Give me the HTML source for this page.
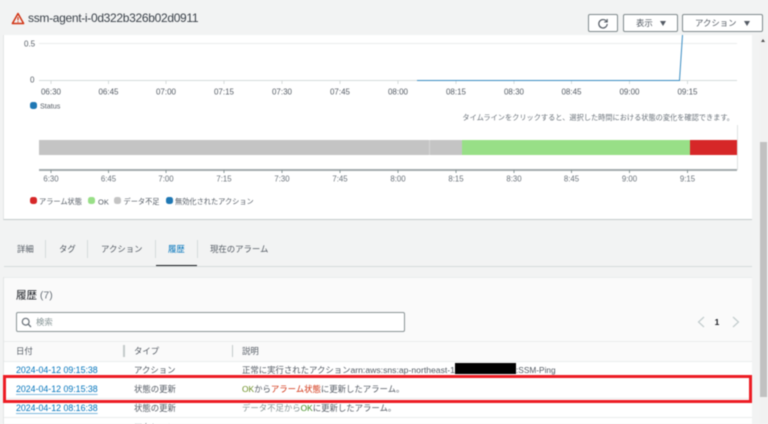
<!DOCTYPE html>
<html lang="ja">
<head>
<meta charset="utf-8">
<style>
html,body{margin:0;padding:0;width:768px;height:424px;overflow:hidden;background:#f2f3f3}
body{font-family:"Liberation Sans","Noto Sans CJK JP",sans-serif;color:#545b64;font-size:8.4px}
#w{position:relative;width:768px;height:424px;overflow:hidden;background:#f2f3f3;filter:blur(.4px)}
.a{position:absolute;white-space:nowrap}
.t{position:absolute;white-space:nowrap;transform:translate(-50%,-50%);font-size:8px}
.m{color:#687078;font-size:7.800px}
.l{position:absolute;white-space:nowrap;transform:translateY(-50%)}
.dot{position:absolute;width:7px;height:7px;border-radius:2.5px}
.btn{position:absolute;top:14px;height:18px;box-sizing:border-box;border:1px solid #7f8a8c;background:#fff;border-radius:2px;color:#545b64;font-size:8.400px;line-height:16px;text-align:center}
.tri{position:absolute;top:6px;border-left:3.5px solid transparent;border-right:3.5px solid transparent;border-top:5px solid #545b64;width:0;height:0}
.sep{position:absolute;width:1px;background:#d5dbdb}
a{color:#0073bb;text-decoration:underline;text-decoration-color:#7fb9dd;text-underline-offset:2px}
</style>
</head>
<body>
<div id="w">
<!-- top card -->
<div class="a" style="left:3px;top:35px;width:749px;height:185px;background:#fff;border-bottom:1px solid #c4caca;border-left:1px solid #e3e6e6;box-sizing:border-box"></div>

<!-- header -->
<svg class="a" style="left:11px;top:12px" width="14" height="13" viewBox="0 0 14 13"><path d="M7 1.5L12.6 11.5H1.4Z" fill="none" stroke="#d13212" stroke-width="1.5" stroke-linejoin="round"/><path d="M7 5v3.3M7 9.2v1.1" stroke="#d13212" stroke-width="1.2"/></svg>
<div class="l" style="left:28px;top:18px;font-size:12px;letter-spacing:-.31px;color:#3a4149">ssm-agent-i-0d322b326b02d0911</div>
<div class="btn" style="left:588px;width:30px"><svg width="12" height="12" viewBox="0 0 12 12" style="position:absolute;left:8px;top:2.5px"><path d="M9.6 3.6A4.2 4.2 0 1 0 10.2 6" fill="none" stroke="#545b64" stroke-width="1.2"/><path d="M10.2 1v3H7.2" fill="none" stroke="#545b64" stroke-width="1.1"/></svg></div>
<div class="btn" style="left:623px;width:55px;text-align:left;padding-left:12px">表示<span class="tri" style="left:36px"></span></div>
<div class="btn" style="left:682px;width:81px;text-align:left;padding-left:12px">アクション<span class="tri" style="left:61px"></span></div>

<!-- scrollbar -->
<div class="a" style="left:752px;top:35px;width:16px;height:389px;background:#f1f1f1"></div>
<div class="a" style="left:752px;top:35px;width:8px;height:389px;background:#f2f3f3"></div>
<div class="a" style="left:760px;top:142px;width:7px;height:255px;background:#c1c1c1"></div>
<div class="a" style="left:761px;top:39px;border-left:2.5px solid transparent;border-right:2.5px solid transparent;border-bottom:3px solid #505050;width:0;height:0"></div>

<!-- upper chart -->
<div class="l" style="left:24px;top:44px;font-size:8px">0.5</div>
<div class="l" style="left:30px;top:80px;font-size:8px">0</div>
<div class="a" style="left:39px;top:43px;width:698px;height:1px;background:#eaeded"></div>
<div class="a" style="left:39px;top:80px;width:698px;height:1px;background:#d5dbdb"></div>
<svg class="a" style="left:0;top:35px" width="768" height="60"><path d="M417 45.5H679.5L682.5 0" fill="none" stroke="#3a8cc2" stroke-width="1"/><path d="M51 46v3M108.500 46v3M166 46v3M224 46v3M282 46v3M340 46v3M398 46v3M456 46v3M514 46v3M571.500 46v3M629.500 46v3M687.500 46v3" stroke="#d5dbdb" stroke-width="1"/></svg>
<div class="t" style="left:51px;top:91.500px">06:30</div>
<div class="t" style="left:108.500px;top:91.500px">06:45</div>
<div class="t" style="left:166px;top:91.500px">07:00</div>
<div class="t" style="left:224px;top:91.500px">07:15</div>
<div class="t" style="left:282px;top:91.500px">07:30</div>
<div class="t" style="left:340px;top:91.500px">07:45</div>
<div class="t" style="left:398px;top:91.500px">08:00</div>
<div class="t" style="left:456px;top:91.500px">08:15</div>
<div class="t" style="left:514px;top:91.500px">08:30</div>
<div class="t" style="left:571.500px;top:91.500px">08:45</div>
<div class="t" style="left:629.500px;top:91.500px">09:00</div>
<div class="t" style="left:687.500px;top:91.500px">09:15</div>
<div class="dot" style="left:30px;top:101.500px;background:#1f78b4"></div>
<div class="l" style="left:40px;top:105.500px;font-size:7.200px">Status</div>

<!-- timeline -->
<div class="l" style="right:34px;top:117.500px;font-size:7.200px;color:#687078">タイムラインをクリックすると、選択した時間における状態の変化を確認できます。</div>
<div class="a" style="left:737px;top:125px;width:1px;height:45px;background:#dfe2e2"></div>
<div class="a" style="left:39px;top:140px;width:391px;height:15px;background:#c4c4c4"></div>
<div class="a" style="left:429px;top:140px;width:33px;height:15px;background:#c4c4c4;border-left:1px solid #d6d6d6;box-sizing:border-box"></div>
<div class="a" style="left:462px;top:140px;width:228px;height:15px;background:#98df87"></div>
<div class="a" style="left:690px;top:140px;width:47px;height:15px;background:#d62728"></div>
<div class="a" style="left:39px;top:169px;width:698px;height:2px;background:#a3abad"></div>
<svg class="a" style="left:0;top:170px" width="768" height="5"><path d="M51 0v3M108.500 0v3M166 0v3M224 0v3M282 0v3M340 0v3M398 0v3M456 0v3M514 0v3M571.500 0v3M629.500 0v3M687.500 0v3" stroke="#879596" stroke-width="1"/></svg>
<div class="t m" style="left:51px;top:178.500px">6:30</div>
<div class="t m" style="left:108.500px;top:178.500px">6:45</div>
<div class="t m" style="left:166px;top:178.500px">7:00</div>
<div class="t m" style="left:224px;top:178.500px">7:15</div>
<div class="t m" style="left:282px;top:178.500px">7:30</div>
<div class="t m" style="left:340px;top:178.500px">7:45</div>
<div class="t m" style="left:398px;top:178.500px">8:00</div>
<div class="t m" style="left:456px;top:178.500px">8:15</div>
<div class="t m" style="left:514px;top:178.500px">8:30</div>
<div class="t m" style="left:571.500px;top:178.500px">8:45</div>
<div class="t m" style="left:629.500px;top:178.500px">9:00</div>
<div class="t m" style="left:687.500px;top:178.500px">9:15</div>

<div class="dot" style="left:29.500px;top:197px;background:#d62728"></div>
<div class="l" style="left:39px;top:201.500px;font-size:7.200px">アラーム状態</div>
<div class="dot" style="left:88px;top:197px;background:#98df87"></div>
<div class="l" style="left:98px;top:201.500px;font-size:7.500px">OK</div>
<div class="dot" style="left:114px;top:197px;background:#c4c4c4"></div>
<div class="l" style="left:123.500px;top:201.500px;font-size:7.200px">データ不足</div>
<div class="dot" style="left:166px;top:197px;background:#1f78b4"></div>
<div class="l" style="left:175px;top:201.500px;font-size:7.200px">無効化されたアクション</div>

<!-- tabs -->
<div class="a" style="left:4px;top:266px;width:748px;height:1px;background:#d5dbdb"></div>
<div class="l" style="left:17px;top:249px;font-size:8.400px">詳細</div>
<div class="l" style="left:59px;top:249px;font-size:8.400px">タグ</div>
<div class="l" style="left:101px;top:249px;font-size:8.400px">アクション</div>
<div class="l" style="left:168px;top:249px;font-size:8.400px;color:#0073bb">履歴</div>
<div class="l" style="left:210px;top:249px;font-size:8.400px">現在のアラーム</div>
<div class="sep" style="left:45px;top:240px;height:18px"></div>
<div class="sep" style="left:87px;top:240px;height:18px"></div>
<div class="sep" style="left:155px;top:240px;height:18px"></div>
<div class="sep" style="left:197px;top:240px;height:18px"></div>
<div class="a" style="left:156px;top:265px;width:41px;height:1px;background:#16191f"></div>

<!-- history card -->
<div class="a" style="left:4px;top:277px;width:748px;height:84px;background:#fafafa;border-top:1px solid #eaeded;box-sizing:border-box"></div>
<div class="a" style="left:4px;top:361px;width:748px;height:63px;background:#fff"></div>
<div class="a" style="left:3px;top:277px;width:1px;height:147px;background:#e3e6e6"></div>
<div class="l" style="left:16px;top:295px;font-size:10.500px;color:#16191f">履歴 <span style="color:#687078">(7)</span></div>
<div class="a" style="left:16px;top:312px;width:389px;height:20px;box-sizing:border-box;background:#fff;border:1px solid #8a9496;border-radius:2px"></div>
<svg class="a" style="left:21px;top:317px" width="11" height="11" viewBox="0 0 11 11"><circle cx="4.700" cy="4.700" r="3.400" fill="none" stroke="#687078" stroke-width="1.200"/><path d="M7.200 7.200L10 10" stroke="#687078" stroke-width="1.300"/></svg>
<div class="l" style="left:36px;top:322px;font-size:8.400px;color:#879596">検索</div>
<svg class="a" style="left:696px;top:315px" width="46" height="14" viewBox="0 0 46 14"><path d="M8 2L2.500 7L8 12" fill="none" stroke="#c2cccd" stroke-width="1.200"/><path d="M37 2L42.500 7L37 12" fill="none" stroke="#c2cccd" stroke-width="1.200"/></svg>
<div class="t" style="left:717px;top:322px;font-size:8.400px;font-weight:700;color:#16191f">1</div>

<div class="a" style="left:4px;top:341px;width:748px;height:1px;background:#eaeded"></div>
<div class="a" style="left:4px;top:361px;width:748px;height:1px;background:#eaeded"></div>
<div class="l" style="left:16px;top:351px;font-size:8.400px">日付</div>
<div class="l" style="left:134px;top:351px;font-size:8.400px">タイプ</div>
<div class="l" style="left:242px;top:351px;font-size:8.400px">説明</div>
<div class="a" style="left:123px;top:345px;width:1.500px;height:12px;background:#c4caca"></div>
<div class="a" style="left:231.500px;top:345px;width:1.500px;height:12px;background:#c4caca"></div>

<div class="a" style="left:4px;top:398px;width:748px;height:1px;background:#eaeded"></div>
<div class="a" style="left:4px;top:417px;width:748px;height:1px;background:#eaeded"></div>

<div class="l" style="left:16px;top:370px;font-size:8.800px"><a>2024-04-12 09:15:38</a></div>
<div class="l" style="left:134px;top:370px;font-size:8.400px">アクション</div>
<div class="l" style="left:242px;top:370px;font-size:8.400px">正常に実行されたアクション<span style="font-size:8.650px">arn:aws:sns:ap-northeast-1</span></div>
<div class="a" style="left:455px;top:363px;width:61px;height:11px;background:#000"></div>
<div class="l" style="left:516px;top:370px;font-size:8.300px">:SSM-Ping</div>

<div class="l" style="left:16px;top:389px;font-size:8.800px"><a>2024-04-12 09:15:38</a></div>
<div class="l" style="left:134px;top:389px;font-size:8.400px">状態の更新</div>
<div class="l" style="left:242px;top:389px;font-size:8.400px"><span style="color:#6b8e23">OK</span>から<span style="color:#d13212">アラーム状態</span>に更新したアラーム。</div>

<div class="l" style="left:16px;top:408px;font-size:8.800px"><a>2024-04-12 08:16:38</a></div>
<div class="l" style="left:134px;top:408px;font-size:8.400px">状態の更新</div>
<div class="l" style="left:242px;top:408px;font-size:8.400px;color:#879596">データ不足から<span style="color:#3c8c1e">OK</span><span style="color:#545b64">に更新したアラーム。</span></div>
<div class="l" style="left:134px;top:427px;font-size:8.400px">アクション</div>

<!-- red highlight -->
<div class="a" style="left:3px;top:375px;width:749px;height:28px;box-sizing:border-box;border-style:solid;border-color:#ed1c24;border-width:3.500px 3px"></div>
</div>
</body>
</html>
